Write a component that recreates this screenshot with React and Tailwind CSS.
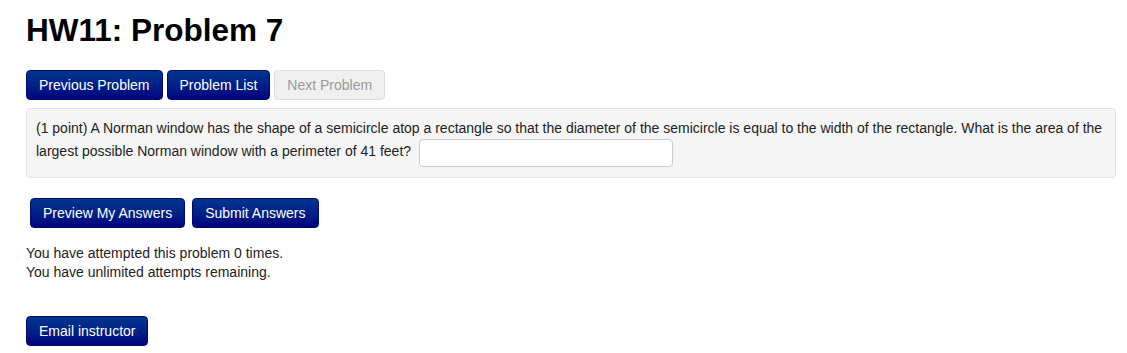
import React from 'react';

const navy =
  'inline-flex items-center h-[30px] px-[12px] rounded-[4px] border border-[#000a6b] bg-gradient-to-b from-[#003590] to-[#00007e] text-white text-[14px] leading-[20px]';

export default function App() {
  return (
    <div className="min-h-screen bg-white px-[26px] text-[#222] font-['Liberation_Sans',Arial,sans-serif]">
      <h1 className="pt-[12px] text-[31.5px] leading-[36px] font-bold text-black">HW11: Problem 7</h1>

      <div className="mt-[22px] flex gap-[4px]">
        <button className={navy}>Previous Problem</button>
        <button className={navy}>Problem List</button>
        <button className="inline-flex items-center h-[30px] px-[12px] rounded-[4px] border border-[#ddd] bg-[#f0f0f0] text-[#9a9a9a] text-[14px] leading-[20px]">
          Next Problem
        </button>
      </div>

      <div className="mt-[8px] w-[1090px] rounded-[4px] border border-[#e3e3e3] bg-[#f5f5f5] px-[9px] pt-[9px] pb-[10px] text-[14px] leading-[20px] text-[#222]">
        <p>
          (1 point) A Norman window has the shape of a semicircle atop a rectangle so that the diameter of the semicircle is equal to the width of the rectangle. What is the area of the largest possible Norman window with a perimeter of 41 feet?{' '}
          <input
            type="text"
            className="ml-[4px] mt-[1px] h-[28px] w-[254px] rounded-[4px] border border-[#ccc] bg-white align-middle"
          />
        </p>
      </div>

      <div className="mt-[20px] ml-[4px] flex gap-[7px]">
        <button className={navy}>Preview My Answers</button>
        <button className={navy}>Submit Answers</button>
      </div>

      <div className="mt-[16px] text-[14px] leading-[19px] text-[#222]">
        <p>You have attempted this problem 0 times.</p>
        <p>You have unlimited attempts remaining.</p>
      </div>

      <div className="mt-[34px]">
        <button className={navy}>Email instructor</button>
      </div>
    </div>
  );
}
